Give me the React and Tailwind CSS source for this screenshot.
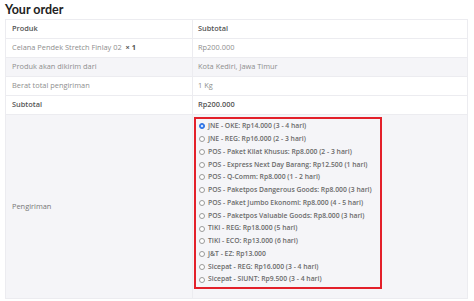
import React from 'react';

const options = [
  'JNE - OKE: Rp14.000 (3 - 4 hari)',
  'JNE - REG: Rp16.000 (2 - 3 hari)',
  'POS - Paket Kilat Khusus: Rp8.000 (2 - 3 hari)',
  'POS - Express Next Day Barang: Rp12.500 (1 hari)',
  'POS - Q-Comm: Rp8.000 (1 - 2 hari)',
  'POS - Paketpos Dangerous Goods: Rp8.000 (3 hari)',
  'POS - Paket Jumbo Ekonomi: Rp8.000 (4 - 5 hari)',
  'POS - Paketpos Valuable Goods: Rp8.000 (3 hari)',
  'TIKI - REG: Rp18.000 (5 hari)',
  'TIKI - ECO: Rp13.000 (6 hari)',
  'J&T - EZ: Rp13.000',
  'Sicepat - REG: Rp16.000 (3 - 4 hari)',
  'Sicepat - SIUNT: Rp9.500 (3 - 4 hari)',
];

const Row = ({ left, right, shaded, bold }) => (
  <div className={`flex h-[19px] border-b border-[#ececf0] ${shaded ? 'bg-[#f5f5f8]' : 'bg-white'}`}>
    <div className={`w-[187px] shrink-0 flex items-center pl-[6px] border-r border-[#ececf0] ${bold ? 'font-semibold text-[#555]' : 'text-[#8e8e8e]'}`}>
      {left}
    </div>
    <div className={`flex-1 flex items-center pl-[5px] ${bold ? 'font-semibold text-[#555]' : 'text-[#8e8e8e]'}`}>
      {right}
    </div>
  </div>
);

export default function App() {
  return (
    <div className="w-[474px] h-[301px] bg-white overflow-hidden" style={{ fontFamily: '"Open Sans", "Noto Sans", sans-serif' }}>
      <h1 className="h-[19px] pl-[5px] text-[12.5px] leading-[19px] font-bold text-[#222]" style={{ fontFamily: 'Lato, sans-serif' }}>Your order</h1>
      <div className="ml-[5px] w-[463px] border-l border-r border-t border-[#ececf0] text-[7.4px]">
        <Row left="Produk" right="Subtotal" bold />
        <Row left={<span>Celana Pendek Stretch Finlay 02 <span className="font-bold text-[#555]">&nbsp;× 1</span></span>} right="Rp200.000" />
        <Row left="Produk akan dikirim dari" right="Kota Kediri, Jawa Timur" shaded />
        <Row left="Berat total pengiriman" right="1 Kg" />
        <Row left="Subtotal" right="Rp200.000" bold />
        <div className="flex h-[184px] bg-[#f5f5f8] border-b border-[#ececf0]">
          <div className="w-[187px] shrink-0 flex items-center pl-[6px] border-r border-[#ececf0] text-[#777]">
            Pengiriman
          </div>
          <div className="flex-1 pl-[1px] pt-[2px]">
            <div className="w-[188px] h-[172px] border-2 border-[#e3202a] flex flex-col justify-around py-[1px] pl-[3px] text-[6.8px]">
              {options.map((o, i) => (
                <div key={o} className="flex items-center gap-[3px] font-semibold text-[#6a6a6a] whitespace-nowrap">
                  {i === 0 ? (
                    <span className="w-[6px] h-[6px] shrink-0 rounded-full bg-[#3b82f6] border border-[#2f6fd8] flex items-center justify-center">
                      <span className="w-[2px] h-[2px] rounded-full bg-white" />
                    </span>
                  ) : (
                    <span className="w-[6px] h-[6px] shrink-0 rounded-full bg-white border border-[#9a9a9a]" />
                  )}
                  <span>{o}</span>
                </div>
              ))}
            </div>
          </div>
        </div>
      </div>
    </div>
  );
}
